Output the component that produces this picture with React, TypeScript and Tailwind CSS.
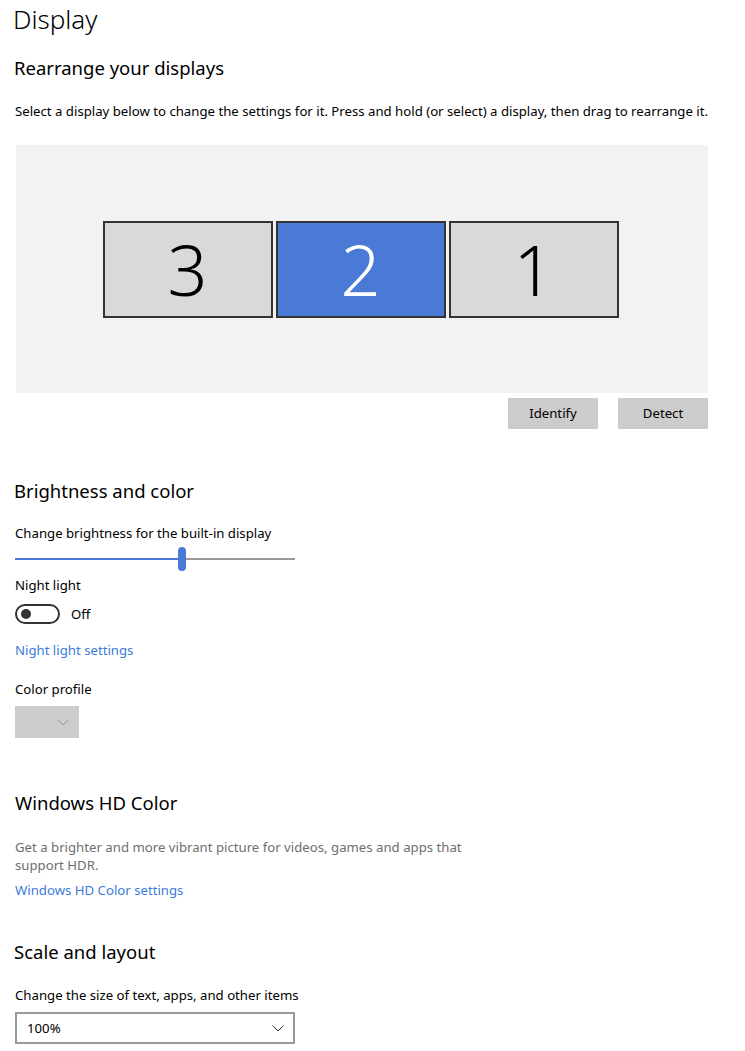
import React from 'react';

const font = { fontFamily: '"Noto Sans", "Open Sans", sans-serif' };

const Chevron: React.FC<{ className?: string }> = ({ className }) => (
  <svg className={className} width="12" height="7" viewBox="0 0 12 7" fill="none">
    <polyline points="0.5,0.5 6,6 11.5,0.5" stroke="currentColor" strokeWidth="1" />
  </svg>
);

const Monitor: React.FC<{ n: string; active?: boolean }> = ({ n, active }) => (
  <div
    className={`w-[170px] h-[97px] border-2 border-[#333333] flex items-center justify-center ${
      active ? 'bg-[#4a79d6] text-white' : 'bg-[#d9d9d9] text-black'
    }`}
  >
    <span className="text-[70px] font-light leading-none">{n}</span>
  </div>
);

export default function App() {
  return (
    <div className="w-[745px] h-[1051px] overflow-hidden bg-white text-black pl-[15px]" style={font}>
      <h1 className="text-[26px] font-light leading-[36px] -ml-[2px] mt-[1px]">Display</h1>
      <h2 className="text-[18.5px] leading-[28px] -ml-[1px] mt-[17px]">Rearrange your displays</h2>
      <p className="text-[13.2px] leading-[20px] mt-[19px]">
        Select a display below to change the settings for it. Press and hold (or select) a display, then drag to rearrange it.
      </p>

      <div className="ml-px mt-[24px] w-[692px] h-[248px] bg-[#f2f2f2] flex items-center justify-center gap-[3px] pr-[3px]">
        <Monitor n="3" />
        <Monitor n="2" active />
        <Monitor n="1" />
      </div>
      <div className="w-[693px] flex justify-end gap-[20px] mt-[5px]">
        <button className="w-[90px] h-[31px] bg-[#cccccc] text-[13.2px]">Identify</button>
        <button className="w-[90px] h-[31px] bg-[#cccccc] text-[13.2px]">Detect</button>
      </div>

      <h2 className="text-[18.5px] leading-[28px] -ml-[1px] mt-[48px]">Brightness and color</h2>
      <p className="text-[13.2px] leading-[20px] mt-[18px]">Change brightness for the built-in display</p>
      <div className="relative w-[280px] h-[24px] mt-[4px] flex items-center">
        <div className="h-[2px] w-[164px] bg-[#4a79d6]" />
        <div className="h-[2px] flex-1 bg-[#999999]" />
        <div className="absolute left-[163px] top-0 w-[8px] h-[24px] rounded-full bg-[#4a79d6]" />
      </div>
      <p className="text-[13.2px] leading-[20px] mt-[4px]">Night light</p>
      <div className="flex items-center mt-[9px] h-[20px]">
        <div className="w-[45px] h-[20px] rounded-full border-2 border-[#333333] flex items-center pl-[4px]">
          <div className="w-[10px] h-[10px] rounded-full bg-[#333333]" />
        </div>
        <span className="ml-[11px] text-[13.2px] leading-[20px]">Off</span>
      </div>
      <p className="text-[13.2px] leading-[20px] mt-[16px] text-[#3c7bd8]">Night light settings</p>
      <p className="text-[13.2px] leading-[20px] mt-[19px]">Color profile</p>
      <div className="mt-[7px] w-[64px] h-[32px] bg-[#cccccc] flex items-center justify-end pr-[10px] text-[#999999]">
        <Chevron />
      </div>

      <h2 className="text-[18.5px] leading-[28px] mt-[51px]">Windows HD Color</h2>
      <p className="text-[13.2px] leading-[18px] mt-[21px] w-[460px] text-[#6e6e6e]">
        Get a brighter and more vibrant picture for videos, games and apps that support HDR.
      </p>
      <p className="text-[13.2px] leading-[20px] mt-[6px] text-[#3c7bd8]">Windows HD Color settings</p>

      <h2 className="text-[18.5px] leading-[28px] -ml-[1px] mt-[38px]">Scale and layout</h2>
      <p className="text-[13.2px] leading-[20px] mt-[19px]">Change the size of text, apps, and other items</p>
      <div className="mt-[7px] w-[280px] h-[32px] border-2 border-[#999999] flex items-center justify-between pl-[10px] pr-[9px]">
        <span className="text-[13.2px] leading-[20px]">100%</span>
        <Chevron className="text-[#333333]" />
      </div>
    </div>
  );
}
